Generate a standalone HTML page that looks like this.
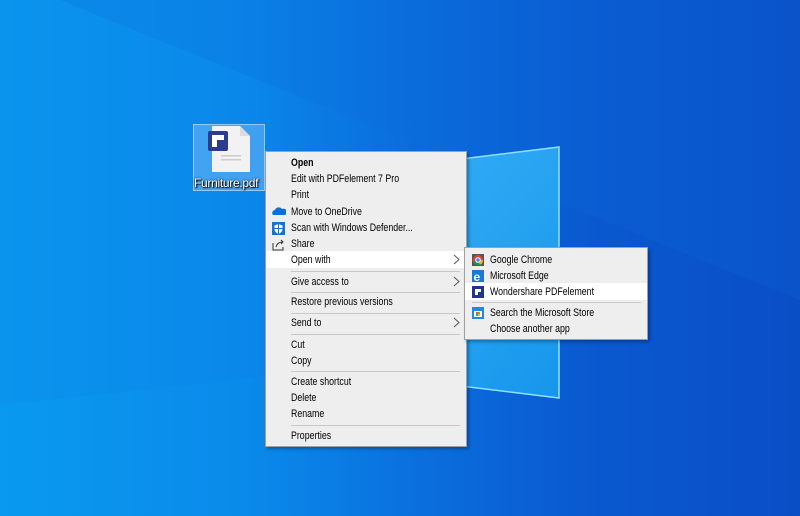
<!DOCTYPE html>
<html><head><style>
*{margin:0;padding:0;box-sizing:border-box}
body{width:800px;height:516px;overflow:hidden;position:relative;font-family:"Liberation Sans",sans-serif;
background:linear-gradient(90deg,#0a94ee 0%,#0a88ea 30%,#0a6cdc 52%,#0a58cf 75%,#0a4ec6 100%);}
.m{position:absolute;background:#eeeeee;border:1px solid #a0a0a0;box-shadow:2px 2px 3px rgba(0,0,0,.3);font-size:11px;color:#000}
.i{position:absolute;left:0;right:0;height:17px;line-height:19px}
.i span{position:absolute;left:25px;transform:scaleX(.8);transform-origin:0 50%;white-space:nowrap}
.s{position:absolute;height:1px;background:#c8c8c8}
.h{background:#fff}
.ar{position:absolute;right:6px;top:3px;width:7px;height:11px}
</style></head><body>
<svg width="800" height="516" style="position:absolute;left:0;top:0">
<defs><linearGradient id="p" x1="0" x2="1" y1="0" y2="1"><stop offset="0" stop-color="#3ab2f7"/><stop offset="1" stop-color="#1696ec"/></linearGradient>
<linearGradient id="d" x1="0" x2="1"><stop offset="0" stop-color="#0a78e0"/><stop offset="1" stop-color="#0a60d4"/></linearGradient>
<linearGradient id="bl" x1="0" x2="1"><stop offset="0" stop-color="#08a0f2"/><stop offset="1" stop-color="#0a80e4" stop-opacity="0"/></linearGradient></defs>
<polygon points="0,0 60,0 800,300 800,0" fill="url(#d)" opacity=".3"/>
<polygon points="0,405 330,370 560,398 560,516 0,516" fill="url(#bl)" opacity=".45"/>
<polygon points="330,175 559,147 559,398 330,370" fill="url(#p)"/>
<polyline points="330,175 559,147 559,398 330,370" fill="none" stroke="#8fe0ff" stroke-width="1.5"/>
</svg>
<div style="position:absolute;left:193px;top:124px;width:72px;height:67px;background:rgba(170,210,255,.35);border:1px solid rgba(200,230,255,.6)"></div>
<svg width="50" height="50" style="position:absolute;left:205px;top:124px">
<path d="M7 2h28l10 10v36H7z" fill="#f2f2f2"/><path d="M35 2v10h10" fill="#dcdcdc"/>
<rect x="16" y="31" width="20" height="1.5" fill="#ccc"/><rect x="16" y="35" width="20" height="1.5" fill="#ccc"/>
<rect x="3" y="7" width="20" height="20" rx="2" fill="#2b3b8f"/><path d="M7 11h12v5h-7v7h-5z" fill="#fff"/><rect x="7" y="17" width="4" height="5" fill="#fff"/></svg>
<div style="position:absolute;left:194px;top:176px;color:#fff;font-size:12px;letter-spacing:-.3px;text-shadow:0 0 2px #000,1px 1px 1px #000">Furniture.pdf</div>

<div class="m" style="left:265px;top:151px;width:202px;height:296px">
<div class="i" style="top:2px"><span style="font-weight:bold">Open</span></div>
<div class="i" style="top:18px"><span>Edit with PDFelement 7 Pro</span></div>
<div class="i" style="top:34px"><span>Print</span></div>
<div class="i" style="top:51px"><svg style="position:absolute;left:6px;top:4px" width="14" height="9"><path d="M1 8a3 3 0 0 1 2-5 4 4 0 0 1 7-1 3 3 0 0 1 3 6z" fill="#0a6fd8"/></svg><span>Move to OneDrive</span></div>
<div class="i" style="top:67px"><svg style="position:absolute;left:6px;top:3px" width="13" height="13"><rect width="13" height="13" fill="#1b6fd0"/><path d="M6.5 2l4 1.5v3.5c0 2.5-2 4-4 5-2-1-4-2.5-4-5V3.5z" fill="#fff"/><path d="M6.5 2v10M2.5 6.5h8" stroke="#1b6fd0"/></svg><span>Scan with Windows Defender...</span></div>
<div class="i" style="top:83px"><svg style="position:absolute;left:6px;top:3px" width="13" height="13" fill="none" stroke="#333"><path d="M1 5v7h10V9"/><path d="M4 9c1-4 4-5 7-5M9 2l2 2-2 2"/></svg><span>Share</span></div>
<div class="i h" style="top:99px"><span>Open with</span><svg class="ar" viewBox="0 0 7 11"><path d="M1 1l5 4.5L1 10" fill="none" stroke="#555"/></svg></div>
<div class="s" style="left:25px;right:6px;top:119px"></div>
<div class="i" style="top:121px"><span>Give access to</span><svg class="ar" viewBox="0 0 7 11"><path d="M1 1l5 4.5L1 10" fill="none" stroke="#555"/></svg></div>
<div class="s" style="left:25px;right:6px;top:140px"></div>
<div class="i" style="top:141px"><span>Restore previous versions</span></div>
<div class="s" style="left:25px;right:6px;top:161px"></div>
<div class="i" style="top:162px"><span>Send to</span><svg class="ar" viewBox="0 0 7 11"><path d="M1 1l5 4.5L1 10" fill="none" stroke="#555"/></svg></div>
<div class="s" style="left:25px;right:6px;top:182px"></div>
<div class="i" style="top:184px"><span>Cut</span></div>
<div class="i" style="top:200px"><span>Copy</span></div>
<div class="s" style="left:25px;right:6px;top:219px"></div>
<div class="i" style="top:221px"><span>Create shortcut</span></div>
<div class="i" style="top:237px"><span>Delete</span></div>
<div class="i" style="top:253px"><span>Rename</span></div>
<div class="s" style="left:25px;right:6px;top:273px"></div>
<div class="i" style="top:275px"><span>Properties</span></div>
</div>

<div class="m" style="left:464px;top:247px;width:184px;height:93px">
<div class="i" style="top:3px"><svg style="position:absolute;left:7px;top:3px" width="12" height="12"><rect width="12" height="12" fill="#555"/><circle cx="6" cy="6" r="5" fill="#db4437"/><path d="M6 6L1.5 8.5A5 5 0 0 0 8 10.8z" fill="#0f9d58"/><path d="M6 6h5A5 5 0 0 1 8 10.8z" fill="#f4b400"/><circle cx="6" cy="6" r="2.3" fill="#4285f4" stroke="#fff"/></svg><span>Google Chrome</span></div>
<div class="i" style="top:19px"><svg style="position:absolute;left:7px;top:3px" width="12" height="12"><rect width="12" height="12" fill="#1a78d6"/><text x="1.5" y="11" font-size="12" font-weight="bold" fill="#fff" font-family="Liberation Sans">e</text></svg><span>Microsoft Edge</span></div>
<div class="i h" style="top:35px"><svg style="position:absolute;left:7px;top:3px" width="12" height="12"><rect width="12" height="12" fill="#22358a"/><path d="M3 3h6v3H6v3H3z" fill="#fff"/></svg><span>Wondershare PDFelement</span></div>
<div class="s" style="left:7px;right:6px;top:54px"></div>
<div class="i" style="top:56px"><svg style="position:absolute;left:7px;top:3px" width="12" height="12"><rect width="12" height="12" fill="#2a86d8"/><rect x="2" y="4" width="8" height="6" fill="#fff"/><rect x="4" y="5" width="2" height="2" fill="#f25022"/><rect x="6" y="5" width="2" height="2" fill="#7fba00"/><rect x="4" y="7" width="2" height="2" fill="#00a4ef"/><rect x="6" y="7" width="2" height="2" fill="#ffb900"/></svg><span>Search the Microsoft Store</span></div>
<div class="i" style="top:72px"><span>Choose another app</span></div>
</div>
</body></html>
